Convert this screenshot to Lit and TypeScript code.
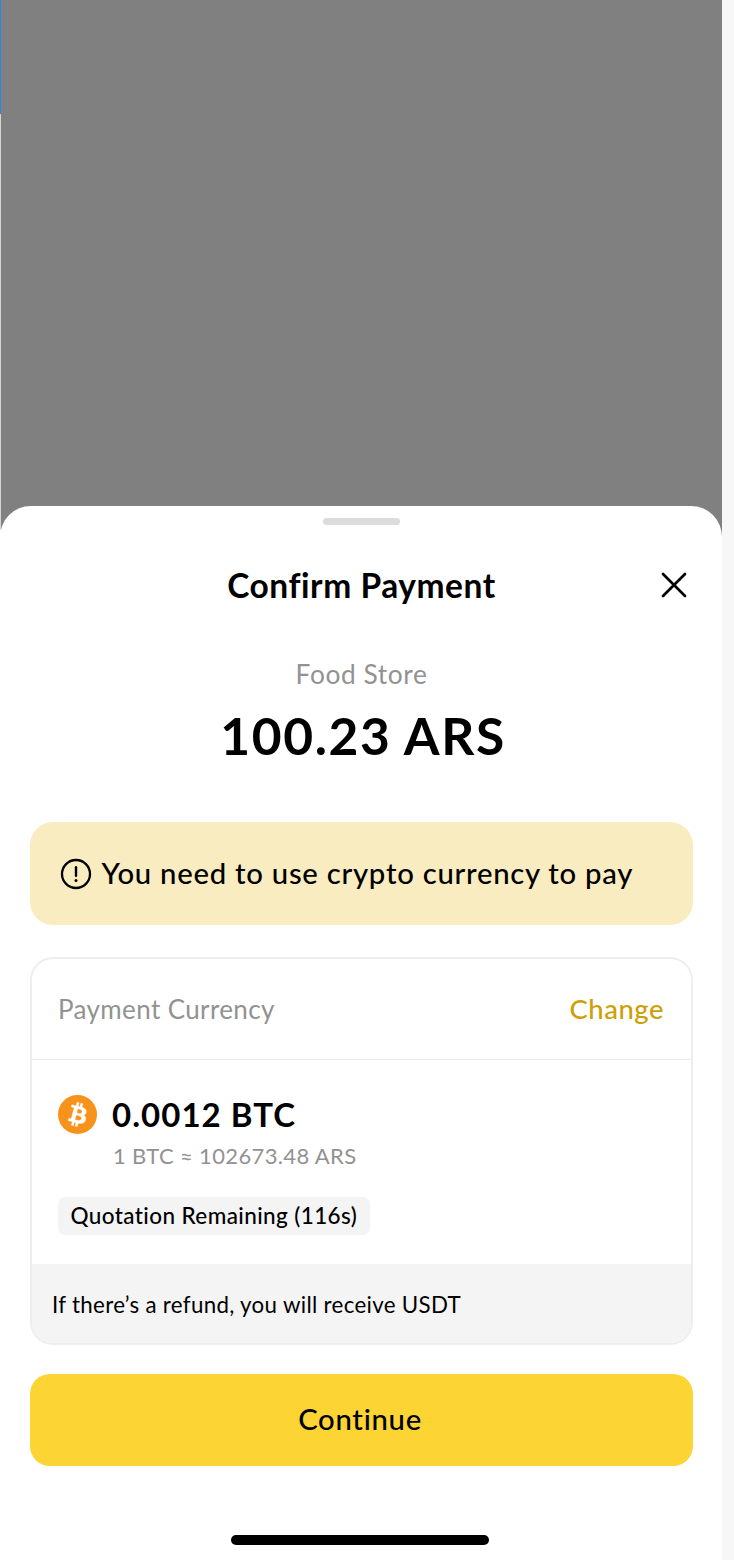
import { LitElement, html, css } from "lit";
import { customElement, property } from "lit/decorators.js";

@customElement("bitcoin-icon")
export class BitcoinIcon extends LitElement {
  static styles = css`
    :host { display: block; flex: none; width: 39px; height: 39px; }
    svg { display: block; width: 100%; height: 100%; }
  `;
  render() {
    return html`<svg viewBox="0 0 32 32" aria-hidden="true">
      <circle cx="16" cy="16" r="16" fill="#f7931a" />
      <path
        fill="#fff"
        stroke="#fff"
        stroke-width="0.3"
        d="M23.189 14.02c.314-2.096-1.283-3.223-3.465-3.975l.708-2.84-1.728-.43-.69 2.765c-.454-.114-.92-.22-1.385-.326l.695-2.783L15.596 6l-.708 2.839c-.376-.086-.746-.17-1.104-.26l.002-.009-2.384-.595-.46 1.846s1.283.294 1.256.312c.7.175.826.638.805 1.006l-.806 3.235c.048.012.11.03.18.057l-.183-.045-1.13 4.532c-.086.212-.303.531-.793.41.018.025-1.256-.313-1.256-.313l-.858 1.978 2.25.561c.418.105.828.215 1.231.318l-.715 2.872 1.727.43.708-2.84c.472.127.93.245 1.378.357l-.706 2.828 1.728.43.715-2.866c2.948.558 5.164.333 6.097-2.333.752-2.146-.037-3.385-1.588-4.192 1.13-.26 1.98-1.003 2.207-2.538zm-3.95 5.538c-.533 2.147-4.148.986-5.32.695l.95-3.805c1.172.293 4.929.872 4.37 3.11zm.535-5.569c-.487 1.953-3.495.96-4.47.717l.86-3.45c.975.243 4.118.696 3.61 2.733z"
      />
    </svg>`;
  }
}

@customElement("payment-card")
export class PaymentCard extends LitElement {
  @property() amount = "";
  @property() rate = "";
  @property({ type: Number }) seconds = 0;

  static styles = css`
    :host {
      display: block;
      box-sizing: border-box;
      height: 388px;
      border: 2px solid #eeeeee;
      border-radius: 23px;
      overflow: hidden;
    }
    .head {
      box-sizing: border-box;
      height: 101px;
      padding: 0 27px 0;
      display: flex;
      align-items: center;
      justify-content: space-between;
      border-bottom: 1px solid #ebebeb;
      font-size: 26px;
      line-height: 32px;
    }
    .label { color: #929292; letter-spacing: 0.38px; margin-left: -1px; }
    .change { color: #cf9f07; font-weight: 500; font-size: 27.5px; letter-spacing: 0.5px; }
    .body { box-sizing: border-box; height: 204px; padding: 34px 26px 0; }
    .amount-row { display: flex; align-items: center; gap: 15px; height: 40px; }
    .amount { font-size: 33px; line-height: 40px; font-weight: 700; letter-spacing: 1.03px; padding-bottom: 1px; }
    .rate { margin: 8px 0 0 55px; font-size: 22px; line-height: 28px; letter-spacing: 0.35px; color: #929292; }
    .chip {
      box-sizing: border-box;
      width: fit-content;
      height: 38px;
      margin-top: 27px;
      padding: 0 12.5px;
      border-radius: 7px;
      background: #f4f4f4;
      font-size: 22.5px;
      line-height: 38px;
      font-weight: 500;
      letter-spacing: 0.4px;
    }
    .foot {
      box-sizing: border-box;
      height: 79px;
      padding: 0 20px;
      background: #f4f4f4;
      font-size: 22.3px;
      line-height: 81px;
      letter-spacing: 0.32px;
    }
  `;

  render() {
    return html`
      <div class="head"><span class="label">Payment Currency</span><span class="change">Change</span></div>
      <div class="body">
        <div class="amount-row">
          <bitcoin-icon></bitcoin-icon>
          <span class="amount">${this.amount}</span>
        </div>
        <div class="rate">${this.rate}</div>
        <div class="chip">Quotation Remaining (${this.seconds}s)</div>
      </div>
      <div class="foot">If there’s a refund, you will receive USDT</div>
    `;
  }
}

@customElement("app-root")
export class AppRoot extends LitElement {
  static styles = css`
    :host {
      display: flex;
      width: 734px;
      height: 1560px;
      overflow: hidden;
      background: #f7f7f7;
      color: #000;
      font-family: Lato, "Open Sans", sans-serif;
    }
    .edge { width: 1px; background: linear-gradient(#3285dc 0 114px, #d5d5d5 114px 530px, #fff 530px); }
    .screen { width: 721px; background: linear-gradient(#808080 0 560px, #fff 560px); }
    .sheet {
      box-sizing: border-box;
      height: 1054px;
      margin: 506px 0 0 -1px;
      padding: 12px 29px 0 30px;
      border-radius: 31px 31px 0 0;
      background: #fff;
      display: flex;
      flex-direction: column;
    }
    .grabber { align-self: center; flex: none; width: 77px; height: 7px; border-radius: 4px; background: #dcdcdc; }
    .title-row {
      display: grid;
      grid-template-columns: 40px 1fr 40px;
      align-items: center;
      height: 60px;
      margin-top: 30px;
    }
    .title {
      grid-column: 2;
      margin: 0;
      text-align: center;
      font-size: 33.5px;
      line-height: 40px;
      font-weight: 700;
      letter-spacing: 0.55px;
    }
    .close { display: block; width: 28px; height: 28px; margin: 0 0 0 7px; }
    .store { margin-top: 42px; text-align: center; font-size: 26.3px; line-height: 34px; letter-spacing: 0.6px; color: #929292; }
    .total { margin-top: 14px; padding-left: 3px; text-align: center; font-size: 51.5px; line-height: 60px; font-weight: 700; letter-spacing: 1.6px; }
    .alert {
      box-sizing: border-box;
      height: 103px;
      margin-top: 57px;
      padding-left: 29.5px;
      display: flex;
      align-items: center;
      gap: 10px;
      border-radius: 23px;
      background: #faecc1;
      font-size: 29.3px;
      font-weight: 500;
      letter-spacing: 0.73px;
      white-space: nowrap;
    }
    .alert svg { flex: none; width: 32px; height: 32px; }
    .alert span { padding-bottom: 2px; }
    payment-card { margin-top: 32px; }
    .continue {
      flex: none;
      height: 92px;
      margin-top: 29px;
      padding: 0 3px 3px 0;
      border: 0;
      border-radius: 20px;
      background: #fcd434;
      color: #000;
      font: 500 29.3px Lato, "Open Sans", sans-serif;
      letter-spacing: 0.7px;
    }
    .home { align-self: center; flex: none; width: 258px; height: 10px; margin: 69px 3px 0 0; border-radius: 5px; background: #000; }
  `;

  render() {
    return html`
      <div class="edge"></div>
      <main class="screen">
        <section class="sheet">
          <div class="grabber"></div>
          <div class="title-row">
            <h1 class="title">Confirm Payment</h1>
            <svg class="close" viewBox="0 0 28 28" fill="none" stroke="#000" stroke-width="2.7" stroke-linecap="round">
              <path d="M3 3 25 25M25 3 3 25" />
            </svg>
          </div>
          <div class="store">Food Store</div>
          <div class="total">100.23 ARS</div>
          <div class="alert">
            <svg viewBox="0 0 32 32" fill="none" stroke="#000">
              <circle cx="16" cy="16" r="14" stroke-width="2.3" />
              <path d="M16 9.2v8.6" stroke-width="2.4" stroke-linecap="round" />
              <circle cx="16" cy="22.6" r="1.5" fill="#000" stroke="none" />
            </svg>
            <span>You need to use crypto currency to pay</span>
          </div>
          <payment-card amount="0.0012 BTC" rate="1 BTC ≈ 102673.48 ARS" seconds="116"></payment-card>
          <button class="continue">Continue</button>
          <div class="home"></div>
        </section>
      </main>
    `;
  }
}
